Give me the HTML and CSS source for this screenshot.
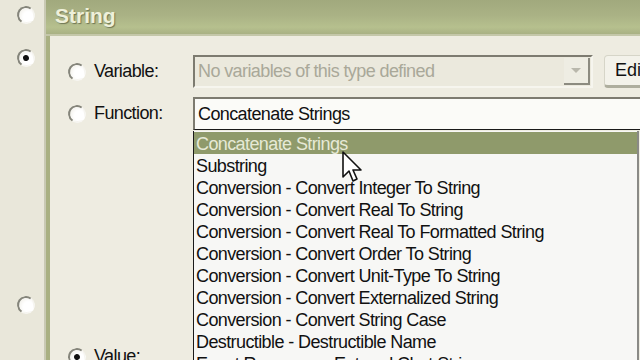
FILE: index.html
```html
<!DOCTYPE html>
<html lang="en">
<head>
    <meta charset="UTF-8">
    <title>String</title>
    <link rel="stylesheet" href="styles.css">
</head>
<body>
    <div class="screen">
        <div class="side">
            <span class="radio"></span>
            <span class="radio checked"></span>
            <span class="radio lower"></span>
        </div>

        <div class="panel">
            <div class="header">String</div>

            <div class="body">
                <div class="row">
                    <span class="radio"></span>
                    <label>Variable:</label>
                    <div class="combo disabled">
                        <span class="combo-text">No variables of this type defined</span>
                        <span class="arrow"><svg width="12" height="7" viewBox="0 0 12 7"><path d="M1 1h10L6 6z" fill="#b9b8ac"/></svg></span>
                    </div>
                    <button class="edit-btn">Edit</button>
                </div>

                <div class="row">
                    <span class="radio"></span>
                    <label>Function:</label>
                    <div class="combo open">
                        <span class="combo-text">Concatenate Strings</span>

                        <ul class="dropdown">
                            <li class="selected">Concatenate Strings</li>
                            <li>Substring</li>
                            <li>Conversion - Convert Integer To String</li>
                            <li>Conversion - Convert Real To String</li>
                            <li>Conversion - Convert Real To Formatted String</li>
                            <li>Conversion - Convert Order To String</li>
                            <li>Conversion - Convert Unit-Type To String</li>
                            <li>Conversion - Convert Externalized String</li>
                            <li>Conversion - Convert String Case</li>
                            <li>Destructible - Destructible Name</li>
                            <li>Event Response - Entered Chat String</li>
                        </ul>
                    </div>
                </div>

                <div class="row value-row">
                    <span class="radio checked"></span>
                    <label>Value:</label>
                </div>
            </div>
        </div>
    </div>

    <!-- mouse pointer over the list -->
    <svg class="cursor" width="22" height="34" viewBox="0 0 22 34">
        <path d="M1 1 L1 26 L7 20 L11 30 L15 28 L11 19 L19 19 Z" fill="#fff" stroke="#111" stroke-width="1.6" stroke-linejoin="round"/>
    </svg>
</body>
</html>
```

FILE: styles.css
```css
* {
    margin: 0;
    padding: 0;
    box-sizing: border-box;
}

body {
    width: 640px;
    height: 360px;
    overflow: hidden;
    background: #e9e7da;
    font-family: 'Liberation Sans', Arial, sans-serif;
    font-size: 18px;
    letter-spacing: -0.6px;
    color: #111;
    position: relative;
}

.screen {
    display: flex;
    height: 360px;
}

/* left column of radios */
.side {
    width: 44px;
    flex-shrink: 0;
    display: flex;
    flex-direction: column;
    align-items: center;
    padding-top: 6px;
    padding-left: 8px;
    gap: 25px;
}

.side .lower {
    margin-top: 204px;
}

/* XP style radio, scaled up */
.radio {
    width: 18px;
    height: 18px;
    border-radius: 50%;
    flex-shrink: 0;
    position: relative;
    background: radial-gradient(circle at 65% 65%, #ffffff 40%, #eceae0 100%);
    border: 2px solid transparent;
    border-top-color: #85857b;
    border-left-color: #85857b;
    transform: rotate(-10deg);
}

.radio.checked::after {
    content: '';
    position: absolute;
    left: 4px;
    top: 4px;
    width: 6px;
    height: 6px;
    border-radius: 50%;
    background: #111;
}

.panel {
    flex: 1;
    min-width: 0;
    overflow: hidden;
    display: flex;
    flex-direction: column;
    border-left: 2px solid #c9c9b4;
    box-shadow: inset 4px 0 0 #a9b082;
    background: #eeece1;
}

.header {
    height: 36px;
    flex-shrink: 0;
    padding: 4px 0 0 9px;
    font-size: 21px;
    font-weight: bold;
    letter-spacing: 0;
    color: #eef0da;
    text-shadow: 1px 1px 1px #6f7655;
    background: linear-gradient(#a1a97d 0%, #aab285 45%, #b6c08e 80%, #a9b184 100%);
    border-bottom: 2px solid #c4c7a9;
}

.body {
    flex: 1;
    display: flex;
    flex-direction: column;
    padding: 19px 0 0 22px;
    gap: 9px;
}

.row {
    display: flex;
    align-items: center;
    height: 33px;
    flex-shrink: 0;
}

.row label {
    width: 107px;
    flex-shrink: 0;
    padding-left: 8px;
}

.combo {
    height: 33px;
    display: flex;
    align-items: center;
    position: relative;
    border: 2px solid #7d7b70;
    border-right-color: #f6f5ee;
    border-bottom-color: #f6f5ee;
    padding-left: 3px;
}

.combo.disabled {
    width: 400px;
    flex-shrink: 0;
    background: #ebe9dd;
    color: #a9a899;
}

.combo.disabled .combo-text {
    flex: 1;
}

.arrow {
    width: 26px;
    height: 27px;
    margin-right: 1px;
    display: flex;
    align-items: center;
    justify-content: center;
    background: #eeede3;
    border-right: 2px solid #8c8b80;
    border-bottom: 2px solid #8c8b80;
}

.edit-btn {
    margin-left: 11px;
    width: 60px;
    flex-shrink: 0;
    height: 33px;
    font: inherit;
    text-align: left;
    padding-left: 10px;
    background: #f3f2ea;
    border: 1px solid #d6d5c8;
    border-bottom: 3px solid #aeae9e;
    border-radius: 4px 0 0 4px;
    color: #111;
}

.combo.open {
    flex: 1;
    background: #fbfbf8;
    border-right: none;
    border-bottom: 1px solid #1a1a1a;
}

/* the open list lies over the rest of the dialog */
.dropdown {
    position: absolute;
    left: -2px;
    top: 32px;
    width: 446px;
    list-style: none;
    background: #f7f7f5;
    border: 1px solid #1a1a1a;
    border-right: 2px solid #8a8a86;
    border-top: none;
    padding-top: 1px;
}

.dropdown li {
    height: 22px;
    line-height: 22px;
    padding: 1px 0 0 2px;
    white-space: nowrap;
}

.dropdown li.selected {
    background: #8f9a6b;
    color: #e6e9d6;
}

.value-row {
    margin-top: 201px;
}

.cursor {
    position: absolute;
    left: 342px;
    top: 151px;
}
```
